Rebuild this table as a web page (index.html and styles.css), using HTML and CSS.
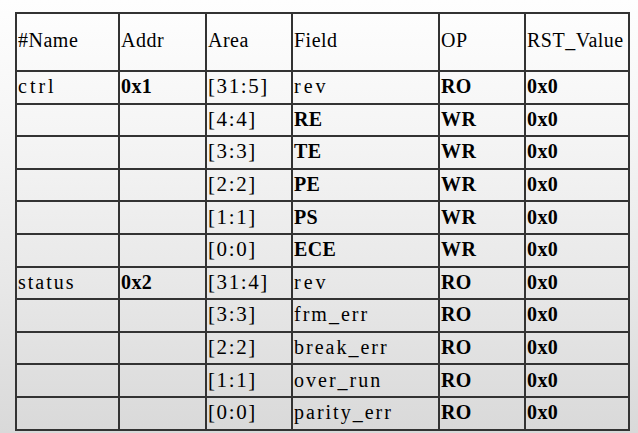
FILE: index.html
```html
<!DOCTYPE html>
<html>
<head>
<meta charset="utf-8">
<link rel="stylesheet" href="styles.css">
</head>
<body>
<div class="page">
<table class="reg">
  <colgroup>
    <col class="c-name"><col class="c-addr"><col class="c-area"><col class="c-field"><col class="c-op"><col class="c-rst">
  </colgroup>
  <thead>
    <tr class="head"><th>#Name</th><th>Addr</th><th>Area</th><th>Field</th><th>OP</th><th>RST_Value</th></tr>
  </thead>
  <tbody>
    <tr><td class="m wide">ctrl</td><td class="b">0x1</td><td class="r">[31:5]</td><td class="m wide">rev</td><td class="b">RO</td><td class="b">0x0</td></tr>
    <tr><td></td><td></td><td class="r">[4:4]</td><td class="b">RE</td><td class="b">WR</td><td class="b">0x0</td></tr>
    <tr><td></td><td></td><td class="r">[3:3]</td><td class="b">TE</td><td class="b">WR</td><td class="b">0x0</td></tr>
    <tr><td></td><td></td><td class="r">[2:2]</td><td class="b">PE</td><td class="b">WR</td><td class="b">0x0</td></tr>
    <tr><td></td><td></td><td class="r">[1:1]</td><td class="b">PS</td><td class="b">WR</td><td class="b">0x0</td></tr>
    <tr><td></td><td></td><td class="r">[0:0]</td><td class="b">ECE</td><td class="b">WR</td><td class="b">0x0</td></tr>
    <tr><td class="m">status</td><td class="b">0x2</td><td class="r">[31:4]</td><td class="m wide">rev</td><td class="b">RO</td><td class="b">0x0</td></tr>
    <tr><td></td><td></td><td class="r">[3:3]</td><td class="m">frm_err</td><td class="b">RO</td><td class="b">0x0</td></tr>
    <tr><td></td><td></td><td class="r">[2:2]</td><td class="m">break_err</td><td class="b">RO</td><td class="b">0x0</td></tr>
    <tr><td></td><td></td><td class="r">[1:1]</td><td class="m">over_run</td><td class="b">RO</td><td class="b">0x0</td></tr>
    <tr><td></td><td></td><td class="r">[0:0]</td><td class="m">parity_err</td><td class="b">RO</td><td class="b">0x0</td></tr>
  </tbody>
</table>
</div>
</body>
</html>
```
FILE: styles.css
```css
html, body {
  margin: 0;
  padding: 0;
  width: 638px;
  height: 433px;
  overflow: hidden;
}
body {
  font-family: "Liberation Serif", serif;
  background: linear-gradient(to bottom, #fefefe 0%, #f5f5f5 30%, #e8e8e8 65%, #d9d9d9 100%);
}
.page {
  padding: 12px 0 0 15px;
}
.reg {
  border-collapse: collapse;
  table-layout: fixed;
  width: 614px;
  color: #000;
  font-family: "Liberation Serif", serif;
}
.c-name { width: 103px; }
.c-addr { width: 87px; }
.c-area { width: 86px; }
.c-field { width: 147px; }
.c-op { width: 86px; }
.c-rst { width: 104px; }
.reg th, .reg td {
  border: 2px solid #333;
  padding: 0 0 1px 1px;
  height: 29.6px;
  text-align: left;
  vertical-align: middle;
  white-space: nowrap;
  overflow: hidden;
}
.reg .head th {
  height: 53px;
  padding-bottom: 3px;
  font-size: 20px;
  font-weight: normal;
  letter-spacing: 0.5px;
}
.m {
  font-size: 20px;
  letter-spacing: 2px;
}
.m.wide {
  letter-spacing: 3px;
}
.b {
  font-size: 20px;
  font-weight: bold;
  letter-spacing: 0.4px;
}
.r {
  font-size: 21px;
  letter-spacing: 1.6px;
}
```
